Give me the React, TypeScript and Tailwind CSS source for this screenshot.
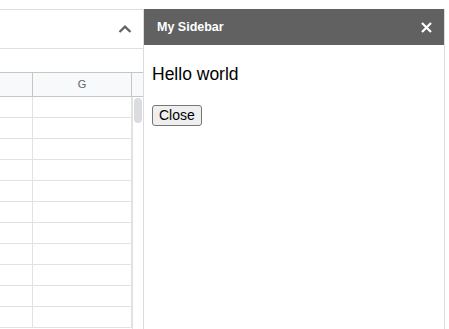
import { ReactNode } from 'react';

const ROWS = Array.from({ length: 11 }, (_, i) => i);

function Chevron() {
  return (
    <svg width="14" height="8" viewBox="0 0 14 8" fill="none">
      <path d="M1.5 7 L7 1.6 L12.5 7" stroke="#5f6368" strokeWidth="2.2" strokeLinecap="butt" />
    </svg>
  );
}

function CloseIcon() {
  return (
    <svg width="11" height="11" viewBox="0 0 11 11" fill="none">
      <path d="M1 1 L10 10 M10 1 L1 10" stroke="#ffffff" strokeWidth="2.2" />
    </svg>
  );
}

function Cell({ children, className = '' }: { children?: ReactNode; className?: string }) {
  return <div className={`h-full border-r ${className}`}>{children}</div>;
}

function SheetPane() {
  return (
    <div className="flex h-full w-[144px] shrink-0 flex-col border-r border-t border-[#dadce0]">
      {/* toolbar */}
      <div className="flex h-[39px] shrink-0 items-center justify-end border-b border-[#e0e0e0] pr-[11px]">
        <Chevron />
      </div>
      {/* formula strip */}
      <div className="h-[24px] shrink-0 border-b border-[#c4c7c5]" />
      {/* column headers */}
      <div className="flex h-[24px] shrink-0 border-b border-[#c4c7c5] bg-[#f8f9fa]">
        <Cell className="w-[33px] border-[#c4c7c5]" />
        <Cell className="flex w-[99px] items-center justify-center border-[#c4c7c5]">
          <span className="font-['Liberation_Sans',Arial,sans-serif] text-[11px] text-[#5f6368]">G</span>
        </Cell>
        <div className="flex-1" />
      </div>
      {/* rows */}
      <div className="flex min-h-0 flex-1 overflow-hidden">
        <div className="w-[132px] shrink-0">
          {ROWS.map((r) => (
            <div key={r} className="flex h-[21px] border-b border-[#e2e2e3]">
              <Cell className="w-[33px] border-[#e2e2e3]" />
              <Cell className="w-[99px] border-[#e2e2e3]" />
            </div>
          ))}
        </div>
        <div className="flex-1 border-l border-[#e2e2e3] pt-[1px] pl-[1px]">
          <div className="h-[25px] w-[8px] rounded-full bg-[#dadce0]" />
        </div>
      </div>
    </div>
  );
}

function Sidebar() {
  return (
    <div className="flex h-full w-[301px] shrink-0 flex-col border-r border-[#dadce0] bg-white">
      <div className="flex h-[36px] shrink-0 items-center justify-between bg-[#616161] pl-[13px] pr-[12px]">
        <span className="font-['Liberation_Sans',Arial,sans-serif] text-[12.5px] font-bold text-white">
          My Sidebar
        </span>
        <CloseIcon />
      </div>
      <div className="px-2 pt-[19px] font-['Liberation_Sans',Arial,sans-serif]">
        <p className="text-[17.5px] leading-[20px] text-black">Hello world</p>
        <button className="mt-[21px] rounded-[3px] border border-[#767676] bg-[#efefef] px-[6px] py-[1px] text-[14px] leading-[17px] text-black">
          Close
        </button>
      </div>
    </div>
  );
}

export default function App() {
  return (
    <div className="h-[329px] w-[449px] overflow-hidden bg-white pt-[9px]">
      <div className="flex h-[320px]">
        <SheetPane />
        <Sidebar />
      </div>
    </div>
  );
}
